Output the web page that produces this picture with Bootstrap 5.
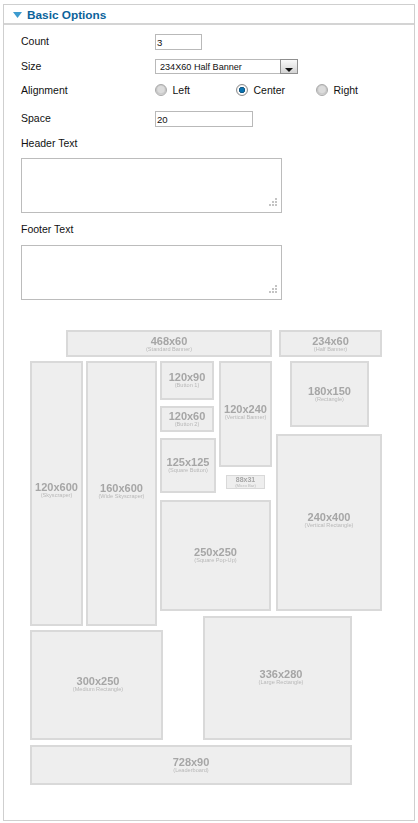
<!DOCTYPE html>
<html lang="en">
<head>
<meta charset="utf-8">
<title>Basic Options</title>
<link href="https://cdn.jsdelivr.net/npm/bootstrap@5.3.0/dist/css/bootstrap.min.css" rel="stylesheet">
<style>
html,body{background:#fff;font-family:"Liberation Sans",Arial,sans-serif;color:#111;font-size:10.5px;line-height:14px}
.opt-panel{margin:4px 3px 2px 3px;width:412px;height:817px;border:1px solid #cfcfcf;border-radius:0;background:#fff}
.opt-head{height:20px;padding:2px 0 0 9px;background:#fff;border-bottom:2px solid #d4d4d4;border-radius:0!important;gap:5px}
.opt-title{font-size:11.8px;font-weight:700;color:#0b639b;line-height:18px}
.opt-body{padding:9px 0 0 17px}
.opt-lab{width:134px;margin:0;flex:none;font-size:10.5px;line-height:14px;color:#111}
.opt-lab-up{margin-top:-2px}
.opt-row{margin-bottom:9px}
.opt-row-tight{margin-bottom:14px}
.opt-in{height:16px;padding:0 1px;border:1px solid #b9b9b9;border-radius:0;font-size:9.6px;line-height:14px;color:#111;box-shadow:none}
.opt-in-s{width:47px}
.opt-in-m{width:98px}
.opt-sel-wrap{width:143px;height:15px}
.opt-sel{height:15px;width:143px;padding:1px 0 0 4px;border:1px solid #b9b9b9;border-radius:0;font-size:9.1px;line-height:13px;color:#111;background-image:none}
.opt-sel-btn{position:absolute;right:0;top:0;width:18px;height:15px;pointer-events:none}
.opt-radio-row{height:14px}
.opt-radio-a{width:81px}
.opt-radio-c{width:80px}
.opt-radio{appearance:none;-webkit-appearance:none;width:12px;height:12px;margin:0 5.5px 0 0!important;flex:none;border:1px solid #a9a9a9;border-radius:50%;background:radial-gradient(circle at 50% 45%,#dcdcdc 0 42%,#c6c6c6 62%,#f4f4f4 80%)}
.opt-radio:checked{border-color:#8d8d8d;background:radial-gradient(circle at 50% 50%,#0a73b0 0 28%,#0d4d78 40%,#fff 48%,#f0f0f0 68%,#c8c8c8 85%)}
.opt-radio-lab{font-size:10.5px;color:#111;line-height:14px}
.opt-text-lab{margin:0 0 8px;font-size:10.5px;line-height:14px;color:#111}
.opt-text-lab-b{margin-bottom:9px}
.opt-area-wrap{width:261px;height:55px;margin-bottom:9px}
.opt-area{width:261px;height:55px;border:1px solid #bcbcbc;border-radius:0;resize:none;padding:2px;box-shadow:none}
.opt-grip{position:absolute;right:5px;bottom:5px;width:10px;height:10px}
.ad-map{position:relative;height:490px;margin:20px 0 0 -17px;filter:blur(.35px)}
.ad-box{position:absolute;border:2px solid #d9d9d9;background:#eee;text-align:center;color:#a6a6a6}
.ad-size{display:block;font-size:11px;font-weight:700;line-height:10px;white-space:nowrap}
.ad-name{display:block;font-size:5.6px;line-height:6px;color:#b8b8b8;white-space:nowrap}
.a468{left:62px;top:10px;width:206px;height:27px;padding-top:4px}
.a234{left:275px;top:10px;width:103px;height:27px;padding-top:4px}
.a120x600{left:26px;top:41px;width:53px;height:265px;padding-top:119px}
.a160{left:82px;top:41px;width:71px;height:265px;padding-top:120px}
.a120x90{left:156px;top:41px;width:54px;height:39px;padding-top:9px}
.a120x60{left:156px;top:86px;width:54px;height:26px;padding-top:3px}
.a125{left:156px;top:118px;width:56px;height:55px;padding-top:17px}
.a120x240{left:215px;top:41px;width:53px;height:106px;padding-top:41px}
.a88{left:222px;top:155px;width:39px;height:14px;padding-top:1px;border-width:1px}
.a88 .ad-size{font-size:7px;line-height:6px}
.a88 .ad-name{font-size:4.2px;line-height:5px}
.a180{left:286px;top:41px;width:79px;height:66px;padding-top:23px}
.a240{left:272px;top:114px;width:106px;height:177px;padding-top:76px}
.a250{left:156px;top:180px;width:111px;height:111px;padding-top:45px}
.a300{left:26px;top:310px;width:133px;height:110px;padding-top:44px;padding-left:3px}
.a336{left:199px;top:296px;width:149px;height:124px;padding-top:51px;padding-left:7px}
.a728{left:26px;top:425px;width:322px;height:40px;padding-top:10px}
</style>
</head>
<body>
<div class="card opt-panel">
  <div class="card-header opt-head d-flex align-items-center">
    <svg width="9" height="6" viewBox="0 0 9 6"><path d="M0 0H9L4.5 6Z" fill="#3d9bcf"/></svg>
    <span class="opt-title">Basic Options</span>
  </div>
  <div class="card-body opt-body">
    <div class="d-flex align-items-center opt-row">
      <label class="opt-lab opt-lab-up" for="c1">Count</label>
      <input id="c1" class="form-control opt-in opt-in-s" value="3">
    </div>
    <div class="d-flex align-items-center opt-row">
      <label class="opt-lab opt-lab-up" for="s1">Size</label>
      <div class="position-relative opt-sel-wrap">
        <select id="s1" class="form-select opt-sel"><option>234X60 Half Banner</option></select>
        <svg class="opt-sel-btn" viewBox="0 0 18 15">
          <defs><linearGradient id="g" x1="0" y1="0" x2="0" y2="1"><stop offset="0" stop-color="#fbfbfb"/><stop offset="1" stop-color="#d2d2d2"/></linearGradient></defs>
          <rect x=".5" y=".5" width="17" height="14" fill="url(#g)" stroke="#8f8f8f"/>
          <path d="M5 9H13L9 13Z" fill="#111"/>
        </svg>
      </div>
    </div>
    <div class="d-flex align-items-center opt-row-tight opt-radio-row">
      <span class="opt-lab">Alignment</span>
      <label class="d-flex align-items-center opt-radio-a opt-radio-lab"><input type="radio" name="al" class="form-check-input opt-radio">Left</label>
      <label class="d-flex align-items-center opt-radio-c opt-radio-lab"><input type="radio" name="al" class="form-check-input opt-radio" checked>Center</label>
      <label class="d-flex align-items-center opt-radio-lab"><input type="radio" name="al" class="form-check-input opt-radio">Right</label>
    </div>
    <div class="d-flex align-items-center opt-row">
      <label class="opt-lab opt-lab-up" for="c2">Space</label>
      <input id="c2" class="form-control opt-in opt-in-m" value="20">
    </div>
    <label class="opt-text-lab d-block" for="t1">Header Text</label>
    <div class="position-relative opt-area-wrap">
      <textarea id="t1" class="form-control opt-area"></textarea>
      <svg class="opt-grip" viewBox="0 0 10 10"><path d="M8 0h2v2H8zM5 3h2v2H5zM8 3h2v2H8zM2 6h2v2H2zM5 6h2v2H5zM8 6h2v2H8z" fill="#c4c4c4"/></svg>
    </div>
    <label class="opt-text-lab opt-text-lab-b d-block" for="t2">Footer Text</label>
    <div class="position-relative opt-area-wrap">
      <textarea id="t2" class="form-control opt-area"></textarea>
      <svg class="opt-grip" viewBox="0 0 10 10"><path d="M8 0h2v2H8zM5 3h2v2H5zM8 3h2v2H8zM2 6h2v2H2zM5 6h2v2H5zM8 6h2v2H8z" fill="#c4c4c4"/></svg>
    </div>
    <div class="ad-map">
      <div class="ad-box a468"><span class="ad-size">468x60</span><span class="ad-name">(Standard Banner)</span></div>
      <div class="ad-box a234"><span class="ad-size">234x60</span><span class="ad-name">(Half Banner)</span></div>
      <div class="ad-box a120x600"><span class="ad-size">120x600</span><span class="ad-name">(Skyscraper)</span></div>
      <div class="ad-box a160"><span class="ad-size">160x600</span><span class="ad-name">(Wide Skyscraper)</span></div>
      <div class="ad-box a120x90"><span class="ad-size">120x90</span><span class="ad-name">(Button 1)</span></div>
      <div class="ad-box a120x60"><span class="ad-size">120x60</span><span class="ad-name">(Button 2)</span></div>
      <div class="ad-box a125"><span class="ad-size">125x125</span><span class="ad-name">(Square Button)</span></div>
      <div class="ad-box a120x240"><span class="ad-size">120x240</span><span class="ad-name">(Vertical Banner)</span></div>
      <div class="ad-box a88"><span class="ad-size">88x31</span><span class="ad-name">(Micro Bar)</span></div>
      <div class="ad-box a180"><span class="ad-size">180x150</span><span class="ad-name">(Rectangle)</span></div>
      <div class="ad-box a240"><span class="ad-size">240x400</span><span class="ad-name">(Vertical Rectangle)</span></div>
      <div class="ad-box a250"><span class="ad-size">250x250</span><span class="ad-name">(Square Pop-Up)</span></div>
      <div class="ad-box a300"><span class="ad-size">300x250</span><span class="ad-name">(Medium Rectangle)</span></div>
      <div class="ad-box a336"><span class="ad-size">336x280</span><span class="ad-name">(Large Rectangle)</span></div>
      <div class="ad-box a728"><span class="ad-size">728x90</span><span class="ad-name">(Leaderboard)</span></div>
    </div>
  </div>
</div>
<script src="https://cdn.jsdelivr.net/npm/bootstrap@5.3.0/dist/js/bootstrap.bundle.min.js"></script>
</body>
</html>
